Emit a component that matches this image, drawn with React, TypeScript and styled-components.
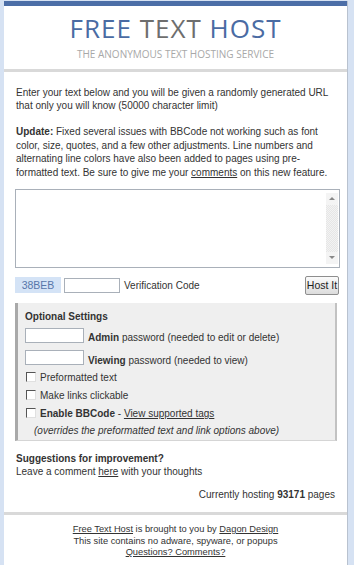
import React from "react";
import styled, { createGlobalStyle } from "styled-components";

const Global = createGlobalStyle`
  html, body { margin: 0; padding: 0; background: #d6e2f3; }
  body { font-family: "Liberation Sans", Arial, sans-serif; }
`;

const Page = styled.div`
  margin: 1px 0 0 4px;
  width: 343px;
  background: #fff;
  border-right: 1px solid #b9c2cf;
  min-height: 564px;
  color: #333;
  font-size: 10px;
  line-height: 13.4px;
`;

const TopBar = styled.div`
  height: 5px;
  background: #4c6ea7;
`;

const Header = styled.div`
  text-align: center;
  padding: 7px 0 9px;
`;

const Title = styled.div`
  font-family: "Open Sans", sans-serif;
  font-size: 26px;
  line-height: 30px;
  color: #4a6ba3;
  letter-spacing: 1px;
`;

const Gray = styled.span`
  color: #6e6e6e;
`;

const Subtitle = styled.div`
  font-family: "Open Sans", sans-serif;
  font-size: 10px;
  line-height: 12px;
  color: #a8a8a8;
  margin-top: 5px;
`;

const Divider = styled.div`
  height: 3px;
  background: #d9d9d9;
`;

const Main = styled.div`
  padding: 14px 12px 0 12px;
`;

const Para = styled.p<{ $mb: number }>`
  margin: 0 0 ${(p) => p.$mb}px 0;
`;

const Link = styled.a`
  color: #333;
  text-decoration: underline;
`;

const TextBox = styled.div`
  display: flex;
  height: 77px;
  border: 1px solid #a9b0b9;
  margin: -3.5px 0 0 -1px;
  width: 323px;
`;

const Area = styled.textarea`
  flex: 1;
  border: none;
  outline: none;
  resize: none;
  padding: 2px;
  font-family: inherit;
`;

const ScrollTrack = styled.div`
  width: 12px;
  margin: 3px 1px 3px 0;
  display: flex;
  flex-direction: column;
  background: repeating-conic-gradient(#f3f3f3 0 25%, #e6e6e6 0 50%) 0 0 / 2px 2px;
`;

const ScrollBtn = styled.div`
  height: 12px;
  background: #f4f4f4;
  display: flex;
  align-items: center;
  justify-content: center;
`;

const Arrow = styled.div<{ $up?: boolean }>`
  width: 0;
  height: 0;
  border-left: 3px solid transparent;
  border-right: 3px solid transparent;
  ${(p) => (p.$up ? "border-bottom: 3px solid #888;" : "border-top: 3px solid #888;")}
`;

const ScrollFill = styled.div`
  flex: 1;
`;

const VerifyRow = styled.div`
  display: flex;
  align-items: center;
  margin: 8px 0 0 -1px;
  height: 19px;
  width: 324px;
`;

const Code = styled.span`
  background: #d4e3f6;
  color: #5776aa;
  width: 46px;
  height: 16px;
  line-height: 16px;
  text-align: center;
  font-size: 10.5px;
`;

const SmallInput = styled.input<{ $w: number; $ml: number }>`
  width: ${(p) => p.$w}px;
  height: 15px;
  box-sizing: border-box;
  border: 1px solid #a9b0b9;
  padding: 0;
  margin: 0 4px 0 ${(p) => p.$ml}px;
  background: #fff;
`;

const HostBtn = styled.button`
  margin-left: auto;
  font-family: inherit;
  font-size: 10.5px;
  color: #222;
  height: 19px;
  width: 34px;
  padding: 0;
  border: 1px solid #8e8e8e;
  border-radius: 2px;
  background: linear-gradient(#fbfbfb, #dcdcdc);
`;

const Options = styled.div`
  margin: 8px 0 0 -1px;
  width: 310px;
  background: #efefef;
  border-left: 3px solid #a9a9a9;
  border-right: 2px solid #c2c2c2;
  border-bottom: 1px solid #d5d5d5;
  padding: 7px 0 0 7px;
`;

const OptTitle = styled.div`
  font-weight: bold;
`;

const InputRow = styled.div<{ $h: number }>`
  display: flex;
  align-items: center;
  height: ${(p) => p.$h}px;
`;

const RowLabel = styled.span`
  padding-top: 5px;
`;

const CheckRow = styled.div`
  display: flex;
  align-items: center;
  height: 18px;
`;

const Box = styled.span`
  width: 8px;
  height: 8px;
  background: #fff;
  border-top: 1px solid #555;
  border-left: 1px solid #555;
  border-right: 1px solid #e0e0e0;
  border-bottom: 1px solid #e0e0e0;
  margin: 0 4px 0 1px;
`;

const Note = styled.div`
  font-style: italic;
  padding-left: 9px;
  height: 18px;
  line-height: 18px;
`;

const Suggest = styled.div`
  margin-top: 10.5px;
`;

const Hosting = styled.div`
  text-align: right;
  margin: 9.6px 0 10.4px;
`;

const Footer = styled.div`
  text-align: center;
  font-size: 9.3px;
  line-height: 11.5px;
  padding-top: 9px;
`;

export default function App() {
  return (
    <>
      <Global />
      <Page>
        <TopBar />
        <Header>
          <Title>
            FREE <Gray>TEXT</Gray> HOST
          </Title>
          <Subtitle>THE ANONYMOUS TEXT HOSTING SERVICE</Subtitle>
        </Header>
        <Divider />
        <Main>
          <Para $mb={12.5}>
            Enter your text below and you will be given a randomly generated URL that only you will
            know (50000 character limit)
          </Para>
          <Para $mb={13.5}>
            <b>Update:</b> Fixed several issues with BBCode not working such as font color, size,
            quotes, and a few other adjustments. Line numbers and alternating line colors have also
            been added to pages using pre-formatted text. Be sure to give me your{" "}
            <Link href="#">comments</Link> on this new feature.
          </Para>
          <TextBox>
            <Area />
            <ScrollTrack>
              <ScrollBtn>
                <Arrow $up />
              </ScrollBtn>
              <ScrollFill />
              <ScrollBtn>
                <Arrow />
              </ScrollBtn>
            </ScrollTrack>
          </TextBox>
          <VerifyRow>
            <Code>38BEB</Code>
            <SmallInput $w={56} $ml={3} />
            <span>Verification Code</span>
            <HostBtn>Host It</HostBtn>
          </VerifyRow>
          <Options>
            <OptTitle>Optional Settings</OptTitle>
            <InputRow $h={24}>
              <SmallInput $w={59} $ml={0} />
              <RowLabel>
                <b>Admin</b> password (needed to edit or delete)
              </RowLabel>
            </InputRow>
            <InputRow $h={21}>
              <SmallInput $w={59} $ml={0} />
              <RowLabel>
                <b>Viewing</b> password (needed to view)
              </RowLabel>
            </InputRow>
            <CheckRow>
              <Box />
              <span>Preformatted text</span>
            </CheckRow>
            <CheckRow>
              <Box />
              <span>Make links clickable</span>
            </CheckRow>
            <CheckRow>
              <Box />
              <span>
                <b>Enable BBCode</b> - <Link href="#">View supported tags</Link>
              </span>
            </CheckRow>
            <Note>(overrides the preformatted text and link options above)</Note>
          </Options>
          <Suggest>
            <b>Suggestions for improvement?</b>
            <br />
            Leave a comment <Link href="#">here</Link> with your thoughts
          </Suggest>
          <Hosting>
            Currently hosting <b>93171</b> pages
          </Hosting>
        </Main>
        <Divider />
        <Footer>
          <Link href="#">Free Text Host</Link> is brought to you by <Link href="#">Dagon Design</Link>
          <br />
          This site contains no adware, spyware, or popups
          <br />
          <Link href="#">Questions? Comments?</Link>
        </Footer>
      </Page>
    </>
  );
}
